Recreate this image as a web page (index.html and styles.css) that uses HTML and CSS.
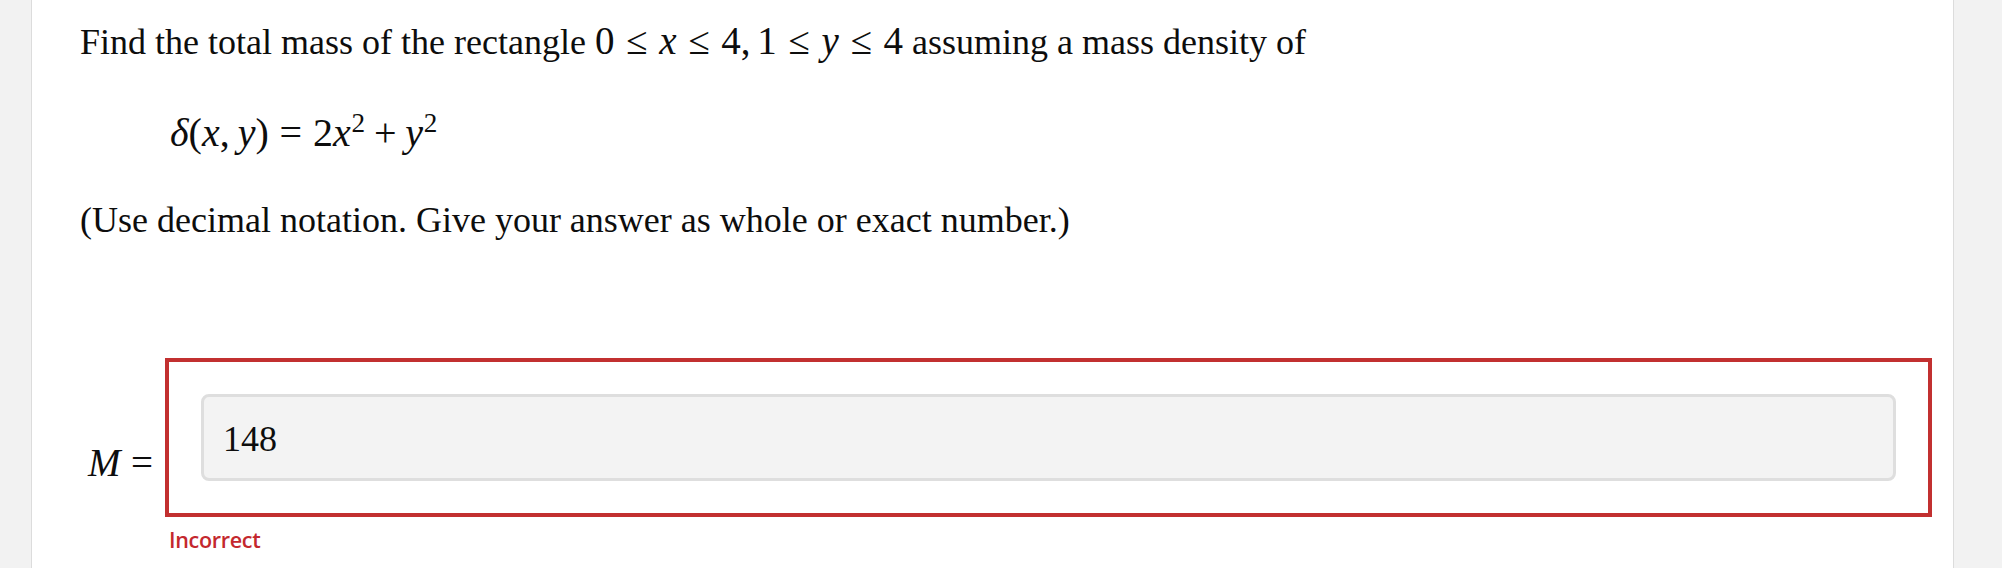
FILE: index.html
```html
<!DOCTYPE html>
<html lang="en">
<head>
<meta charset="utf-8">
<title>Mass of a rectangle</title>
<link rel="stylesheet" href="styles.css">
</head>
<body>
<div class="page">
  <div class="card">
    <p class="text line-first">Find the total mass of the rectangle <span class="math">0<span class="rel">≤</span><i>x</i><span class="rel">≤</span>4,<span class="thin"></span>1<span class="rel">≤</span><i>y</i><span class="rel">≤</span>4</span> assuming a mass density of</p>
    <p class="display-math"><span class="math"><i>δ</i>(<i>x</i>,<span class="thin"></span><i>y</i>)<span class="rel">=</span>2<i>x</i><sup>2</sup><span class="bin">+</span><i>y</i><sup>2</sup></span></p>
    <p class="text line-note">(Use decimal notation. Give your answer as whole or exact number.)</p>
    <div class="answer-row">
      <span class="label math"><i>M</i><span class="rel">=</span></span>
      <div class="answer-col">
        <div class="answer-box incorrect">
          <div class="answer-input">148</div>
        </div>
        <div class="feedback">Incorrect</div>
      </div>
    </div>
  </div>
</div>
</body>
</html>
```
FILE: styles.css
```css
html, body {
  margin: 0;
  padding: 0;
  background: #f2f2f2;
}

.page {
  display: flex;
  min-height: 568px;
  padding-left: 31px;
  padding-right: 48px;
}

.card {
  flex: 1;
  background: #ffffff;
  border-left: 1px solid #dcdcdc;
  border-right: 1px solid #dcdcdc;
  padding: 21px 21px 0 48px;
  font-family: "Liberation Serif", "Times New Roman", serif;
  color: #0d0d0d;
}

.text {
  margin: 0;
  font-size: 36px;
  line-height: 41px;
}

.math {
  font-family: "Liberation Serif", "Times New Roman", serif;
}

.text .math {
  font-size: 39px;
  line-height: 1;
}

.math i {
  font-style: italic;
}

.rel {
  padding: 0 0.27em;
}

.text .math .rel {
  padding: 0 0.3em;
}

.bin {
  padding: 0 0.22em;
}

.thin {
  display: inline-block;
  width: 0.17em;
}

.math sup {
  font-size: 0.68em;
  line-height: 0;
  vertical-align: 0.5em;
  margin-left: 0.03em;
}

.display-math {
  margin: 46px 0 0 90px;
  font-size: 40px;
  line-height: 48px;
}

.display-math .thin {
  width: 0.2em;
}

.line-note {
  margin-top: 43px;
}

.answer-row {
  display: flex;
  align-items: flex-start;
  margin-top: 117px;
  gap: 12px;
}

.label {
  width: 73px;
  text-align: right;
  font-size: 39px;
  line-height: 41px;
  margin-top: 84px;
  white-space: nowrap;
}

.label .rel {
  padding-right: 0;
}

.answer-col {
  flex: 1;
  display: flex;
  flex-direction: column;
}

.answer-box {
  border: 4px solid #c23030;
  padding: 32px 32px;
  background: #ffffff;
}

.answer-input {
  box-sizing: border-box;
  height: 87px;
  border: 3px solid #dedede;
  border-radius: 8px;
  background: #f3f3f3;
  display: flex;
  align-items: center;
  padding-left: 19px;
  padding-top: 2px;
  font-family: "Liberation Serif", "Times New Roman", serif;
  font-size: 36px;
  line-height: 36px;
  color: #0d0d0d;
}

.feedback {
  margin-top: 8px;
  margin-left: 4px;
  font-family: "Open Sans", "Liberation Sans", sans-serif;
  font-weight: 600;
  font-size: 21.5px;
  line-height: 29px;
  color: #c4282e;
  letter-spacing: -0.3px;
}
```
